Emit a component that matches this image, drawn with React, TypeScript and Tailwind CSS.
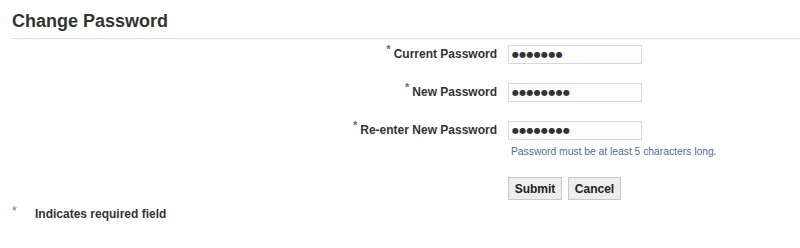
import React from "react";

interface Field {
  label: string;
  dots: number;
  hint?: string;
}

const fields: Field[] = [
  { label: "Current Password", dots: 7 },
  { label: "New Password", dots: 8 },
  { label: "Re-enter New Password", dots: 8, hint: "Password must be at least 5 characters long." },
];

const Req = () => (
  <span className="text-[#3a78b0] text-[11px] relative -top-[5px] mr-[3px]">*</span>
);

const App: React.FC = () => {
  return (
    <div className="w-[800px] h-[248px] bg-white font-['Liberation_Sans',Arial,sans-serif] text-[#333]">
      <div className="pl-3 pt-[10px]">
        <h1 className="text-[18px] font-bold leading-[22px] text-[#333]">Change Password</h1>
        <div className="mt-[6px] border-t border-[#dcdcdc]" />
      </div>

      <div className="flex flex-col gap-[19px] mt-[6px]">
        {fields.map((f) => (
          <div key={f.label} className="flex items-start">
            <div className="w-[497px] text-right text-[12px] font-bold leading-[19px]">
              <Req />
              {f.label}
            </div>
            <div className="ml-[11px] flex flex-col">
              <input
                type="text"
                readOnly
                value={"●".repeat(f.dots)}
                className="w-[134px] h-[19px] border border-[#d9d9d9] bg-[#fdfdfd] px-[3px] text-[8px] tracking-[0.3px] text-[#333] font-['DejaVu_Sans',sans-serif] outline-none"
              />
              {f.hint && (
                <p className="mt-[6px] ml-[3px] text-[10.3px] leading-[12px] text-[#4c6f96]">{f.hint}</p>
              )}
            </div>
          </div>
        ))}
      </div>

      <div className="flex gap-[6px] ml-[508px] mt-[19px]">
        <button className="w-[54px] h-[23px] border border-[#c9c9c9] bg-[#ededed] text-[12px] font-bold text-[#222]">
          Submit
        </button>
        <button className="w-[53px] h-[23px] border border-[#c9c9c9] bg-[#ededed] text-[12px] font-bold text-[#222]">
          Cancel
        </button>
      </div>

      <div className="flex items-start mt-[5px] pl-3">
        <span className="w-[23px] text-[#3a78b0] text-[12px] leading-[12px]">*</span>
        <span className="text-[12px] font-bold leading-[16px] mt-[1px]">Indicates required field</span>
      </div>
    </div>
  );
};

export default App;
